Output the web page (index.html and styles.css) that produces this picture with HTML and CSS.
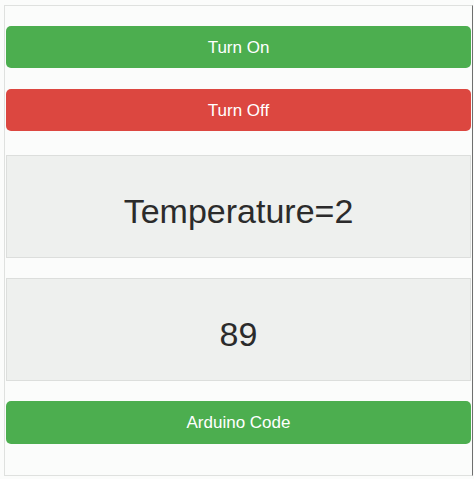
FILE: index.html
```html
<!DOCTYPE html>
<html lang="en">
<head>
  <meta charset="UTF-8" />
  <meta name="viewport" content="width=device-width, initial-scale=1.0" />
  <title>Arduino Control</title>
  <link rel="stylesheet" href="styles.css">
</head>
<body>
  <div class="wrap">
    <a href="#" class="btn btn-on">Turn On</a>
    <a href="#" class="btn btn-off">Turn Off</a>
    <div class="panel">Temperature=2</div>
    <div class="panel">89</div>
    <a href="#" class="btn btn-on">Arduino Code</a>
  </div>
</body>
</html>
```

FILE: styles.css
```css
body { margin: 0; background: #fbfcfb; font-family: 'Liberation Sans', Arial, sans-serif; }
.wrap { margin: 5px 1px 1px 4px; border: 1px solid #dfe1df; border-right-color: #6f6f6f; padding: 20px 1px 31px 1px; display: flex; flex-direction: column; }
.btn { display: flex; align-items: center; justify-content: center; height: 42px; padding-top: 1px; box-sizing: border-box; border-radius: 5px; color: #fff; font-size: 17px; text-decoration: none; }
.btn-on { background: #4cae4f; }
.btn-off { background: #dc4740; margin-top: 21px; }
.panel { height: 101px; box-sizing: content-box; padding-top: 10px; height: 91px; display: flex; align-items: center; justify-content: center; background: #eef0ee; border: 1px solid #dcdedc; color: #2b2b2b; font-size: 34px; }
.btn-off + .panel { margin-top: 24px; }
.panel + .panel { margin-top: 20px; }
.panel + .btn { margin-top: 20px; height: 43px; }
```
